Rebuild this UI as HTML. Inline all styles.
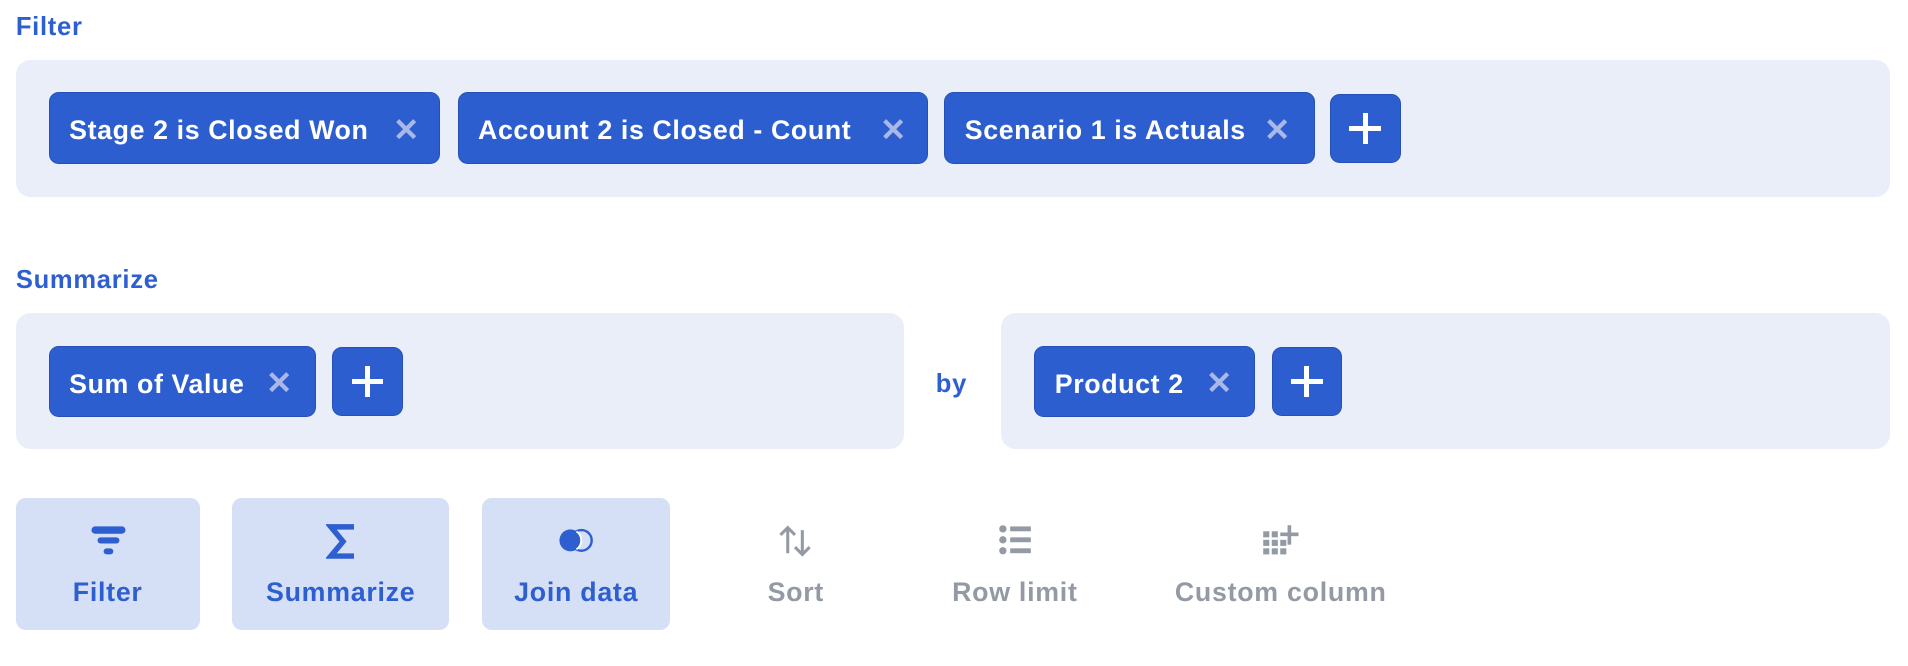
<!DOCTYPE html>
<html><head><style>
html,body{margin:0;padding:0;background:#fff;}
body{width:1568px;height:547px;zoom:1.21684;position:relative;overflow:hidden;font-family:"Liberation Sans",sans-serif;font-weight:bold;}
.a{position:absolute;}
.lbl{color:#2D5FD0;font-size:21px;letter-spacing:0.6px;}
.box{background:#EAEEF9;border-radius:12px;}
.chip{background:#2D5ECF;border-radius:8px;color:#fff;font-size:22px;letter-spacing:0.5px;height:59px;line-height:61px;box-sizing:border-box;padding-left:16px;border:1px solid #2550b8;}
.chip .x{position:absolute;top:19px;width:20px;height:20px;}
.plus{background:#2D5ECF;border-radius:8px;width:58px;height:57px;border:1px solid #2550b8;box-sizing:border-box;}
.plus:before,.plus:after{content:"";position:absolute;background:#fff;left:50%;top:50%;}
.plus:before{width:26px;height:4px;margin:-2px 0 0 -13px;}
.plus:after{width:4px;height:26px;margin:-13px 0 0 -2px;}
.btn{background:#D5DFF5;border-radius:8px;height:109px;top:409px;}
.bl{position:absolute;top:65px;left:0;right:0;text-align:center;font-size:22px;letter-spacing:0.6px;color:#2D5FD0;}
.g{color:#949AA3;}
</style></head><body>
<div class="a lbl" style="left:13px;top:11px">Filter</div>
<div class="a box" style="left:13px;top:49px;width:1540px;height:113px"></div>
<div class="a chip" style="left:40px;top:76px;width:322px">Stage 2 is Closed Won<svg class="x" style="left:283px" viewBox="0 0 20 20"><path d="M3 3L17 17M17 3L3 17" stroke="#A9B8E8" stroke-width="3.5"/></svg></div>
<div class="a chip" style="left:376px;top:76px;width:387px">Account 2 is Closed - Count<svg class="x" style="left:347px" viewBox="0 0 20 20"><path d="M3 3L17 17M17 3L3 17" stroke="#A9B8E8" stroke-width="3.5"/></svg></div>
<div class="a chip" style="left:776px;top:76px;width:305px">Scenario 1 is Actuals<svg class="x" style="left:263px" viewBox="0 0 20 20"><path d="M3 3L17 17M17 3L3 17" stroke="#A9B8E8" stroke-width="3.5"/></svg></div>
<div class="a plus" style="left:1093px;top:77px"></div>

<div class="a lbl" style="left:13px;top:219px">Summarize</div>
<div class="a box" style="left:13px;top:257px;width:730px;height:112px"></div>
<div class="a chip" style="left:40px;top:284px;width:220px">Sum of Value<svg class="x" style="left:179px" viewBox="0 0 20 20"><path d="M3 3L17 17M17 3L3 17" stroke="#A9B8E8" stroke-width="3.5"/></svg></div>
<div class="a plus" style="left:273px;top:285px"></div>
<div class="a lbl" style="left:769px;top:304px">by</div>
<div class="a box" style="left:823px;top:257px;width:730px;height:112px"></div>
<div class="a chip" style="left:850px;top:284px;width:181px">Product 2<svg class="x" style="left:141px" viewBox="0 0 20 20"><path d="M3 3L17 17M17 3L3 17" stroke="#A9B8E8" stroke-width="3.5"/></svg></div>
<div class="a plus" style="left:1045px;top:285px"></div>

<div class="a btn" style="left:13px;width:151px">
<svg class="a" style="left:60px;top:22px" width="32" height="28" viewBox="0 0 32 28"><rect x="2" y="2" width="28" height="6" rx="3" fill="#2D5FD0"/><rect x="7" y="11" width="18" height="5" rx="2.5" fill="#2D5FD0"/><rect x="12" y="20" width="8" height="5" rx="2.5" fill="#2D5FD0"/></svg>
<div class="bl">Filter</div></div>
<div class="a btn" style="left:191px;width:178px">
<svg class="a" style="left:77px;top:20px" width="26" height="32" viewBox="0 0 26 32"><path d="M23 4H4L14 16L4 28H23" fill="none" stroke="#2D5FD0" stroke-width="4.5"/></svg>
<div class="bl">Summarize</div></div>
<div class="a btn" style="left:396px;width:155px">
<svg class="a" style="left:62px;top:24px" width="32" height="22" viewBox="0 0 32 22"><circle cx="20" cy="11" r="8.5" fill="none" stroke="#2D5FD0" stroke-width="2"/><circle cx="11" cy="11" r="9" fill="#2D5FD0"/><path d="M16 3.6A9 9 0 0 1 16 18.4" fill="none" stroke="#fff" stroke-width="1.5"/></svg>
<div class="bl">Join data</div></div>
<div class="a" style="left:580px;top:409px;width:148px;height:109px">
<svg class="a" style="left:59px;top:22px" width="30" height="28" viewBox="0 0 30 28"><path d="M8 24V3M2 9L8 3L14 9M20 5V25M14 19L20 25L26 19" fill="none" stroke="#949AA3" stroke-width="2.5"/></svg>
<div class="bl g">Sort</div></div>
<div class="a" style="left:760px;top:409px;width:148px;height:109px">
<svg class="a" style="left:60px;top:22px" width="28" height="26" viewBox="0 0 28 26"><circle cx="4" cy="4" r="3" fill="#949AA3"/><circle cx="4" cy="13" r="3" fill="#949AA3"/><circle cx="4" cy="22" r="3" fill="#949AA3"/><rect x="10" y="2" width="17" height="4" fill="#949AA3"/><rect x="10" y="11" width="17" height="4" fill="#949AA3"/><rect x="10" y="20" width="17" height="4" fill="#949AA3"/></svg>
<div class="bl g">Row limit</div></div>
<div class="a" style="left:950px;top:409px;width:205px;height:109px">
<svg class="a" style="left:87px;top:22px" width="34" height="28" viewBox="0 0 34 28"><g fill="#949AA3"><rect x="1" y="6" width="5" height="5"/><rect x="8" y="6" width="5" height="5"/><rect x="1" y="13" width="5" height="5"/><rect x="8" y="13" width="5" height="5"/><rect x="15" y="13" width="5" height="5"/><rect x="1" y="20" width="5" height="5"/><rect x="8" y="20" width="5" height="5"/><rect x="15" y="20" width="5" height="5"/><rect x="21" y="1" width="3" height="16"/><rect x="15" y="7" width="15" height="3"/></g></svg>
<div class="bl g">Custom column</div></div>
</body></html>
